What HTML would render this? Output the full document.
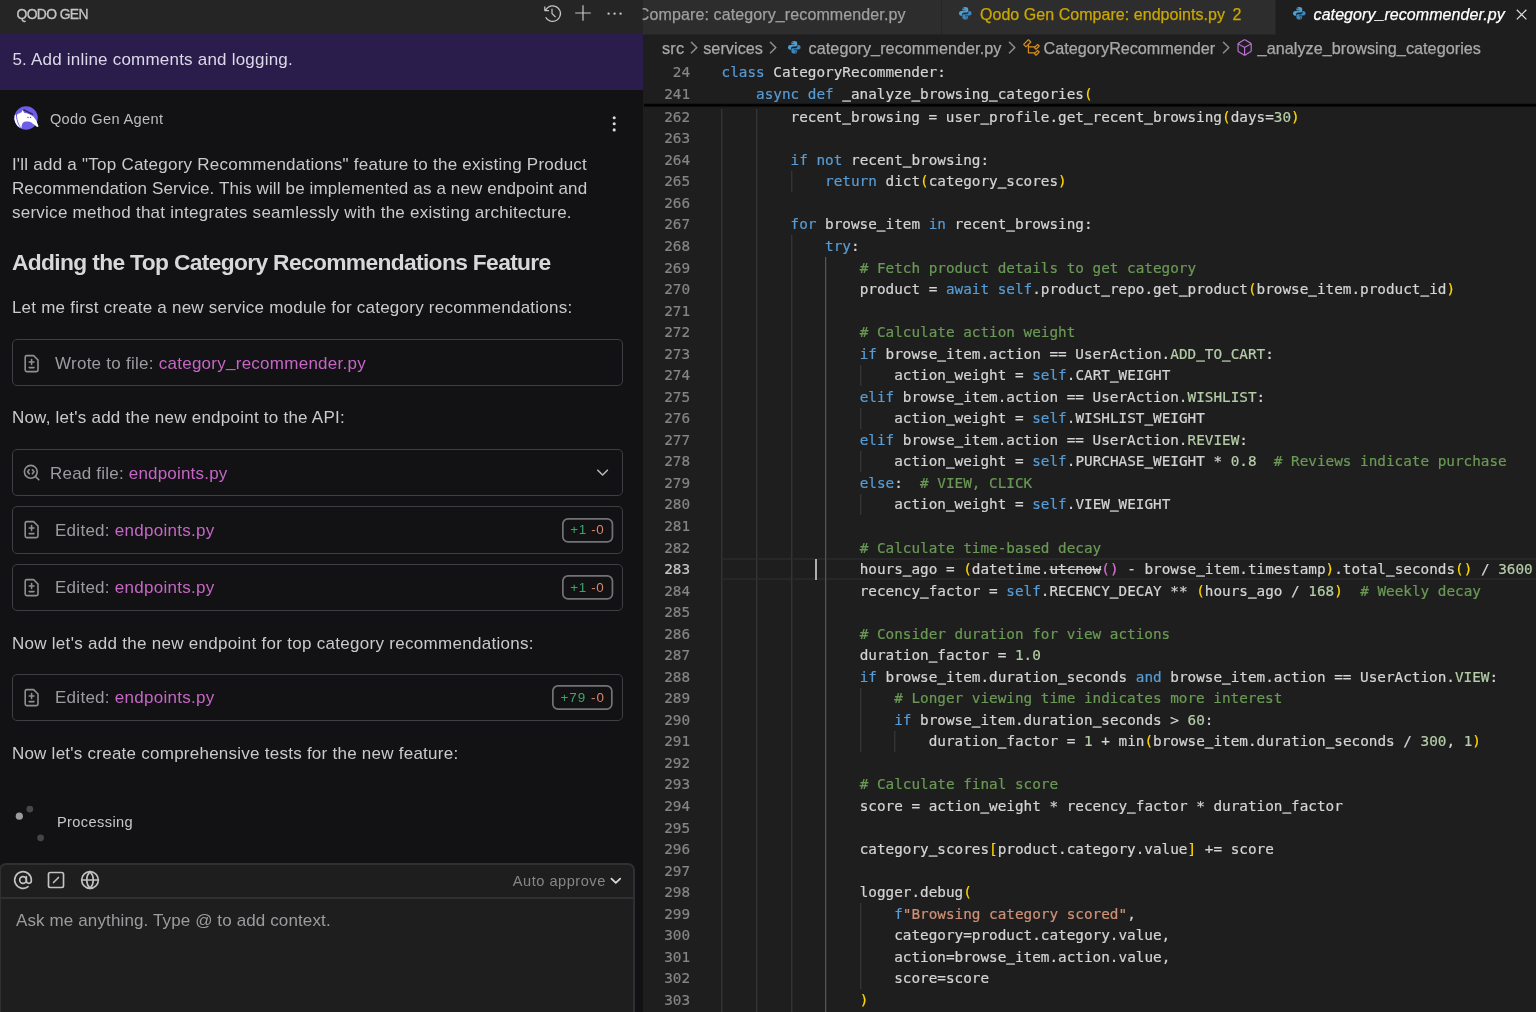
<!DOCTYPE html>
<html lang="en"><head><meta charset="utf-8"><title>Qodo Gen</title>
<style>
html,body{margin:0;padding:0}
body{width:1536px;height:1012px;overflow:hidden;position:relative;background:#1e1e1e;font-family:"Liberation Sans", sans-serif}
.abs{position:absolute}
.grp{position:absolute;left:0;top:0;width:0;height:0;margin:0;padding:0}
.t{margin:0;font-weight:normal}
.card{position:absolute;left:12px;width:611px;border:1px solid #3e3e43;border-radius:5px;box-sizing:border-box}
.ln{position:absolute;left:643px;width:47.1px;text-align:right;font-family:"DejaVu Sans Mono", "Liberation Mono", monospace;font-size:14.343px;line-height:22px;white-space:pre}
.cl{position:absolute;font-family:"DejaVu Sans Mono", "Liberation Mono", monospace;font-size:14.343px;line-height:22px;color:#d4d4d4;white-space:pre}
.u{position:relative;top:-1px;text-shadow:0 -0.7px 0 currentColor}
.us{position:relative;top:-1.2px}
.cl,.ln{-webkit-text-stroke:0.2px currentColor}
.g{position:absolute;width:1px;background:#333333}
.g2{position:absolute;width:1px;background:#272727}
svg{position:absolute;overflow:visible}
</style></head><body><div id="root" style="position:absolute;left:0;top:0;width:1536px;height:1012px;overflow:hidden;will-change:transform">

<aside id="qodo-panel" class="grp">
<div class='abs' style='left:0;top:0;width:642.5px;height:1012px;background:#121214'></div>
<header id="panel-title" class="grp">
<div class='abs' style='left:0;top:0;width:642.5px;height:34.3px;background:#252526'></div>
<h1 id="ttl" class="t" style='position:absolute;left:16.50px;top:5.01px;line-height:19px;font-size:13.9px;font-family:"Liberation Sans", sans-serif;color:#c4c4c4;white-space:pre;-webkit-text-stroke:0.3px currentColor;letter-spacing:-0.626px;'>QODO GEN</h1>
<svg style="left:542.9px;top:4.0px" width="19.2" height="19.2" viewBox="0 0 16 16"><path fill="#c5c5c5"  d="M13.507 12.324a7 7 0 0 0 .065-8.56A7 7 0 0 0 2 4.393V2H1v3.5l.5.5H5V5H2.811a6.008 6.008 0 1 1-.135 5.77l-.887.462a7 7 0 0 0 11.718 1.092zm-3.361-.97l.708-.707L8 7.792V4H7v4l.146.354 3 3z"/></svg>
<svg style="left:573.8px;top:4.0px" width="19.2" height="19.2" viewBox="0 0 16 16"><path fill="#c5c5c5"  d="M14 7v1H8v6H7V8H1V7h6V1h1v6h6z"/></svg>
<svg style="left:605.4px;top:4.2px" width="19.2" height="19.2" viewBox="0 0 16 16"><path fill="#c5c5c5"  d="M4 8a1 1 0 1 1-2 0 1 1 0 0 1 2 0zm5 0a1 1 0 1 1-2 0 1 1 0 0 1 2 0zm5 0a1 1 0 1 1-2 0 1 1 0 0 1 2 0z"/></svg>
</header>
<section id="user-message" class="grp">
<div class='abs' style='left:0;top:34.3px;width:642.6px;height:55.3px;background:#2b1d4b'></div>
<div id="ban" class="t" style='position:absolute;left:12.40px;top:47.61px;line-height:24px;font-size:17.0px;font-family:"Liberation Sans", sans-serif;color:#dcd8e8;white-space:pre;letter-spacing:0.211px;'>5. Add inline comments and logging.</div>
</section>
<section id="agent-message" class="grp">
<div id="agent" class="t" style='position:absolute;left:49.90px;top:109.00px;line-height:20px;font-size:14.6px;font-family:"Liberation Sans", sans-serif;color:#bdbdc0;white-space:pre;letter-spacing:0.340px;'>Qodo Gen Agent</div>
<svg style="left:604px;top:110px" width="20" height="30" viewBox="604 110 20 30"><circle cx="614.2" cy="117.8" r="1.55" fill="#dadadc"/><circle cx="614.2" cy="123.8" r="1.55" fill="#dadadc"/><circle cx="614.2" cy="129.9" r="1.55" fill="#dadadc"/></svg>
<div class='card' style='top:339px;height:47px'></div>
<div class='card' style='top:449px;height:47px'></div>
<div class='card' style='top:506px;height:48px'></div>
<div class='card' style='top:564px;height:47px'></div>
<div class='card' style='top:674px;height:47px'></div>
<svg style="left:559.60px;top:515.55px" width="55.30" height="28.75" viewBox="559.60 515.55 55.30 28.75"><rect x="562.45" y="518.40" width="49.60" height="23.05" rx="5.2" fill="none" stroke="#737375" stroke-width="1.7"/></svg>
<svg style="left:559.60px;top:572.95px" width="55.30" height="28.75" viewBox="559.60 572.95 55.30 28.75"><rect x="562.45" y="575.80" width="49.60" height="23.05" rx="5.2" fill="none" stroke="#737375" stroke-width="1.7"/></svg>
<svg style="left:550.00px;top:682.90px" width="64.70" height="29.00" viewBox="550.00 682.90 64.70 29.00"><rect x="552.85" y="685.75" width="59.00" height="23.30" rx="5.2" fill="none" stroke="#737375" stroke-width="1.7"/></svg>
<svg style="left:22.3px;top:353.59999999999997px" width="19.2" height="19.2" viewBox="0 0 24 24" fill="none" stroke="#8f8f92" stroke-width="2" stroke-linecap="round" stroke-linejoin="round"><path d="M14.5 2H6a2 2 0 0 0-2 2v16a2 2 0 0 0 2 2h12a2 2 0 0 0 2-2V7.5L14.5 2z"/><path d="M9 10h6"/><path d="M12 13V7"/><path d="M9 17h6"/></svg>
<svg style="left:22.3px;top:520.4px" width="19.2" height="19.2" viewBox="0 0 24 24" fill="none" stroke="#8f8f92" stroke-width="2" stroke-linecap="round" stroke-linejoin="round"><path d="M14.5 2H6a2 2 0 0 0-2 2v16a2 2 0 0 0 2 2h12a2 2 0 0 0 2-2V7.5L14.5 2z"/><path d="M9 10h6"/><path d="M12 13V7"/><path d="M9 17h6"/></svg>
<svg style="left:22.3px;top:577.8000000000001px" width="19.2" height="19.2" viewBox="0 0 24 24" fill="none" stroke="#8f8f92" stroke-width="2" stroke-linecap="round" stroke-linejoin="round"><path d="M14.5 2H6a2 2 0 0 0-2 2v16a2 2 0 0 0 2 2h12a2 2 0 0 0 2-2V7.5L14.5 2z"/><path d="M9 10h6"/><path d="M12 13V7"/><path d="M9 17h6"/></svg>
<svg style="left:22.3px;top:688.0px" width="19.2" height="19.2" viewBox="0 0 24 24" fill="none" stroke="#8f8f92" stroke-width="2" stroke-linecap="round" stroke-linejoin="round"><path d="M14.5 2H6a2 2 0 0 0-2 2v16a2 2 0 0 0 2 2h12a2 2 0 0 0 2-2V7.5L14.5 2z"/><path d="M9 10h6"/><path d="M12 13V7"/><path d="M9 17h6"/></svg>
<svg style="left:22.25px;top:462.9px" width="19.2" height="19.2" viewBox="0 0 24 24" fill="none" stroke="#8f8f92" stroke-width="2" stroke-linecap="round" stroke-linejoin="round"><circle cx="11" cy="11" r="8"/><path d="m21 21-4.3-4.3"/><path d="m13 13.5 2-2.5-2-2.5"/><path d="m9 8.5-2 2.5 2 2.5"/></svg>
<svg style="left:593.4px;top:462.9px" width="19.2" height="19.2" viewBox="0 0 24 24" fill="none" stroke="#b4b4b6" stroke-width="2" stroke-linecap="round" stroke-linejoin="round"><path d="m6 9 6 6 6-6"/></svg>
<svg style="left:13.5px;top:106.4px" width="26" height="24.5" viewBox="13.5 106.4 26 24.5"><circle cx="25.55" cy="118.4" r="11.7" fill="#6d5fe8"/><path fill="#ffffff" d="M17.3 114.3 L21.0 112.7 L22.2 110.4 L23.6 113.2 C27 113.8 31 115.2 33.3 117.5 L35.8 121 L38.1 127 L36.5 127.4 C34.5 125.5 33 124.5 32 123.8 C30.5 122.6 29.2 122 28.2 121.9 L25.1 121.9 C23.5 122.3 22.5 123 21.9 123.8 C21.2 125.2 21 127 21 129 C18.5 125.5 16.6 120.5 16.4 115.6 Z"/><path fill="#ffffff" d="M14.39 114.9 A11.7 11.7 0 0 0 20.09 128.75 C17.6 125.3 15.6 120.5 15.4 115.3 Z"/><path fill="none" stroke="#2e2668" stroke-width="1.4" stroke-linecap="round" d="M23.4 110.3 C26 111.9 29.5 113.2 32.0 114.6"/><circle cx="27.5" cy="117.7" r="0.6" fill="#2a2a2a"/><circle cx="30.15" cy="117.7" r="0.6" fill="#2a2a2a"/></svg>
<p id="p1" class="t" style='position:absolute;left:11.90px;top:153.21px;line-height:24px;font-size:17.0px;font-family:"Liberation Sans", sans-serif;color:#cacacc;white-space:pre;letter-spacing:0.239px;'>I&#39;ll add a &quot;Top Category Recommendations&quot; feature to the existing Product</p>
<p id="p2" class="t" style='position:absolute;left:11.90px;top:176.91px;line-height:24px;font-size:17.0px;font-family:"Liberation Sans", sans-serif;color:#cacacc;white-space:pre;letter-spacing:0.138px;'>Recommendation Service. This will be implemented as a new endpoint and</p>
<p id="p3" class="t" style='position:absolute;left:11.90px;top:200.61px;line-height:24px;font-size:17.0px;font-family:"Liberation Sans", sans-serif;color:#cacacc;white-space:pre;letter-spacing:0.267px;'>service method that integrates seamlessly with the existing architecture.</p>
<h2 id="h1" class="t" style='position:absolute;left:12.00px;top:245.81px;line-height:32px;font-size:22.8px;font-family:"Liberation Sans", sans-serif;color:#d8d8da;white-space:pre;font-weight:bold;letter-spacing:-0.659px;'>Adding the Top Category Recommendations Feature</h2>
<p id="p4" class="t" style='position:absolute;left:11.90px;top:296.30px;line-height:24px;font-size:17.0px;font-family:"Liberation Sans", sans-serif;color:#cacacc;white-space:pre;letter-spacing:0.232px;'>Let me first create a new service module for category recommendations:</p>
<div id="c1" class="t" style='position:absolute;left:55.00px;top:351.61px;line-height:24px;font-size:17.0px;font-family:"Liberation Sans", sans-serif;color:#c566c5;white-space:pre;letter-spacing:0.259px;'><span style="color:#9c9ca0">Wrote to file: </span>category<span class="us">_</span>recommender.py</div>
<p id="p5" class="t" style='position:absolute;left:11.90px;top:406.00px;line-height:24px;font-size:17.0px;font-family:"Liberation Sans", sans-serif;color:#cacacc;white-space:pre;letter-spacing:0.240px;'>Now, let&#39;s add the new endpoint to the API:</p>
<div id="c2" class="t" style='position:absolute;left:50.00px;top:461.80px;line-height:24px;font-size:17.0px;font-family:"Liberation Sans", sans-serif;color:#c566c5;white-space:pre;letter-spacing:0.198px;'><span style="color:#9c9ca0">Read file: </span>endpoints.py</div>
<div id="c3" class="t" style='position:absolute;left:55.00px;top:519.00px;line-height:24px;font-size:17.0px;font-family:"Liberation Sans", sans-serif;color:#c566c5;white-space:pre;letter-spacing:0.272px;'><span style="color:#9c9ca0">Edited: </span>endpoints.py</div>
<div id="c4" class="t" style='position:absolute;left:55.00px;top:576.21px;line-height:24px;font-size:17.0px;font-family:"Liberation Sans", sans-serif;color:#c566c5;white-space:pre;letter-spacing:0.272px;'><span style="color:#9c9ca0">Edited: </span>endpoints.py</div>
<p id="p6" class="t" style='position:absolute;left:11.90px;top:631.61px;line-height:24px;font-size:17.0px;font-family:"Liberation Sans", sans-serif;color:#cacacc;white-space:pre;letter-spacing:0.294px;'>Now let&#39;s add the new endpoint for top category recommendations:</p>
<div id="c5" class="t" style='position:absolute;left:55.00px;top:686.41px;line-height:24px;font-size:17.0px;font-family:"Liberation Sans", sans-serif;color:#c566c5;white-space:pre;letter-spacing:0.272px;'><span style="color:#9c9ca0">Edited: </span>endpoints.py</div>
<p id="p7" class="t" style='position:absolute;left:11.90px;top:741.80px;line-height:24px;font-size:17.0px;font-family:"Liberation Sans", sans-serif;color:#cacacc;white-space:pre;letter-spacing:0.250px;'>Now let&#39;s create comprehensive tests for the new feature:</p>
<div id="b1" class="t" style='position:absolute;left:570.30px;top:520.30px;line-height:19px;font-size:13.4px;font-family:"Liberation Sans", sans-serif;color:#3fa468;white-space:pre;letter-spacing:0.613px;'><span style="color:#3fa468">+1</span> <span style="color:#d9866c">-0</span></div>
<div id="b2" class="t" style='position:absolute;left:570.30px;top:577.71px;line-height:19px;font-size:13.4px;font-family:"Liberation Sans", sans-serif;color:#3fa468;white-space:pre;letter-spacing:0.613px;'><span style="color:#3fa468">+1</span> <span style="color:#d9866c">-0</span></div>
<div id="b3" class="t" style='position:absolute;left:560.50px;top:687.91px;line-height:19px;font-size:13.4px;font-family:"Liberation Sans", sans-serif;color:#3fa468;white-space:pre;letter-spacing:1.038px;'><span style="color:#3fa468">+79</span> <span style="color:#d9866c">-0</span></div>
<svg style="left:0;top:800px" width="60" height="50" viewBox="0 800 60 50"><circle cx="19.3" cy="816.2" r="3.6" fill="#9c9c9e"/><circle cx="29.8" cy="809.1" r="3.4" fill="#474749"/><circle cx="40.6" cy="837.8" r="3.4" fill="#454547"/></svg>
<div id="proc" class="t" style='position:absolute;left:57.00px;top:811.91px;line-height:20px;font-size:14.6px;font-family:"Liberation Sans", sans-serif;color:#c8c8ca;white-space:pre;letter-spacing:0.380px;'>Processing</div>
</section>
<footer id="chat-input" class="grp">
<div class='abs' style='left:-1px;top:862.6px;width:632.4px;height:160px;background:#1e1e1e;border:2px solid #303032;border-radius:7px;box-sizing:content-box'></div>
<div class='abs' style='left:0;top:896.8px;width:634px;height:2px;background:#303032'></div>
<svg style="left:607.3px;top:871.8px" width="17.6" height="17.6" viewBox="0 0 24 24" fill="none" stroke="#d6d6d8" stroke-width="2.4" stroke-linecap="round" stroke-linejoin="round"><path d="m6 9 6 6 6-6"/></svg>
<svg style="left:12.75px;top:870.1px" width="20" height="20" viewBox="0 0 24 24" fill="none" stroke="#c2c2c4" stroke-width="2" stroke-linecap="round" stroke-linejoin="round"><circle cx="12" cy="12" r="4"/><path d="M16 8v5a3 3 0 0 0 6 0v-1a10 10 0 1 0-4 8"/></svg>
<svg style="left:46.3px;top:870.1px" width="20" height="20" viewBox="0 0 24 24" fill="none" stroke="#c2c2c4" stroke-width="2" stroke-linecap="round" stroke-linejoin="round"><rect width="18" height="18" x="3" y="3" rx="2"/><path d="M9 15 15 9"/></svg>
<svg style="left:79.7px;top:870.1px" width="20" height="20" viewBox="0 0 24 24" fill="none" stroke="#c2c2c4" stroke-width="2" stroke-linecap="round" stroke-linejoin="round"><circle cx="12" cy="12" r="10"/><path d="M12 2a14.5 14.5 0 0 0 0 20 14.5 14.5 0 0 0 0-20"/><path d="M2 12h20"/></svg>
<div id="auto" class="t" style='position:absolute;left:512.80px;top:871.00px;line-height:20px;font-size:14.6px;font-family:"Liberation Sans", sans-serif;color:#868688;white-space:pre;letter-spacing:0.514px;'>Auto approve</div>
<div id="ph" class="t" style='position:absolute;left:16.00px;top:909.00px;line-height:24px;font-size:17.0px;font-family:"Liberation Sans", sans-serif;color:#9c9ca0;white-space:pre;letter-spacing:0.125px;'>Ask me anything. Type @ to add context.</div>
</footer>
</aside>
<main id="editor" class="grp">
<div id="tabs" class="grp" role="tablist">
<div class='abs' style='left:642.5px;top:0;width:893.5px;height:35px;background:#252527'></div>
<div class='abs' style='left:642.5px;top:0;width:298.5px;height:34px;background:#2d2d2d'></div>
<div class='abs' style='left:941.6px;top:0;width:333.8px;height:34px;background:#2d2d2d'></div>
<div class='abs' style='left:1276px;top:0;width:260px;height:35px;background:#1e1e1e'></div>
<svg style="left:1512.2px;top:4.5px" width="19.2" height="19.2" viewBox="0 0 16 16"><path fill="#e0e0e0"  d="M8 8.707l3.646 3.647.708-.707L8.707 8l3.647-3.646-.707-.708L8 7.293 4.354 3.646l-.707.708L7.293 8l-3.646 3.646.707.708L8 8.707z"/></svg>
<svg style="left:958.8px;top:7.0px" width="12.6" height="12.6" viewBox="0 0 12 12"><path fill="#4b9fd5" fill-rule="evenodd" d="M6 0C3.6 0 3.3 1 3.3 2V3.3H6.2V3.8H2C0.8 3.8 0 4.8 0 6C0 7.4 0.8 8.3 2 8.3H3V6.9C3 5.9 3.8 5.2 4.7 5.2H7.4C8.2 5.2 8.8 4.6 8.8 3.8V2C8.8 0.8 7.8 0 6 0ZM4.6 0.9A0.55 0.55 0 1 1 4.6 2A0.55 0.55 0 1 1 4.6 0.9Z"/><path fill="#3a86bd" fill-rule="evenodd" transform="rotate(180 6 6)" d="M6 0C3.6 0 3.3 1 3.3 2V3.3H6.2V3.8H2C0.8 3.8 0 4.8 0 6C0 7.4 0.8 8.3 2 8.3H3V6.9C3 5.9 3.8 5.2 4.7 5.2H7.4C8.2 5.2 8.8 4.6 8.8 3.8V2C8.8 0.8 7.8 0 6 0ZM4.6 0.9A0.55 0.55 0 1 1 4.6 2A0.55 0.55 0 1 1 4.6 0.9Z"/></svg>
<svg style="left:1293.1px;top:7.0px" width="12.6" height="12.6" viewBox="0 0 12 12"><path fill="#4b9fd5" fill-rule="evenodd" d="M6 0C3.6 0 3.3 1 3.3 2V3.3H6.2V3.8H2C0.8 3.8 0 4.8 0 6C0 7.4 0.8 8.3 2 8.3H3V6.9C3 5.9 3.8 5.2 4.7 5.2H7.4C8.2 5.2 8.8 4.6 8.8 3.8V2C8.8 0.8 7.8 0 6 0ZM4.6 0.9A0.55 0.55 0 1 1 4.6 2A0.55 0.55 0 1 1 4.6 0.9Z"/><path fill="#3a86bd" fill-rule="evenodd" transform="rotate(180 6 6)" d="M6 0C3.6 0 3.3 1 3.3 2V3.3H6.2V3.8H2C0.8 3.8 0 4.8 0 6C0 7.4 0.8 8.3 2 8.3H3V6.9C3 5.9 3.8 5.2 4.7 5.2H7.4C8.2 5.2 8.8 4.6 8.8 3.8V2C8.8 0.8 7.8 0 6 0ZM4.6 0.9A0.55 0.55 0 1 1 4.6 2A0.55 0.55 0 1 1 4.6 0.9Z"/></svg>
<div id="tab1" class="t" style='position:absolute;left:637.80px;top:3.81px;line-height:22px;font-size:16.0px;font-family:"Liberation Sans", sans-serif;color:#9f9f9f;white-space:pre;clip-path:inset(-5px -5px -5px 4.9px);-webkit-text-stroke:0.25px currentColor;letter-spacing:0.114px;'>Compare: category<span class="us">_</span>recommender.py</div>
<div id="tab2" class="t" style='position:absolute;left:980.00px;top:3.81px;line-height:22px;font-size:16.0px;font-family:"Liberation Sans", sans-serif;color:#cca700;white-space:pre;-webkit-text-stroke:0.25px currentColor;letter-spacing:0.043px;'>Qodo Gen Compare: endpoints.py</div>
<div id="tab2n" class="t" style='position:absolute;left:1232.40px;top:3.81px;line-height:22px;font-size:16.0px;font-family:"Liberation Sans", sans-serif;color:#cca700;white-space:pre;-webkit-text-stroke:0.25px currentColor;letter-spacing:-0.106px;'>2</div>
<div id="tab3" class="t" style='position:absolute;left:1313.60px;top:3.81px;line-height:22px;font-size:16.0px;font-family:"Liberation Sans", sans-serif;color:#ffffff;white-space:pre;font-style:italic;-webkit-text-stroke:0.25px currentColor;letter-spacing:0.064px;'>category<span class="us">_</span>recommender.py</div>
</div>
<nav id="breadcrumbs" class="grp">
<svg style="left:683.6px;top:38.3px" width="19.2" height="19.2" viewBox="0 0 16 16"><path fill="#929292" stroke="#929292" stroke-width="0.45" d="M10.072 8.024L5.715 3.667l.618-.62L11 7.716v.618L6.333 13l-.618-.619 4.357-4.357z"/></svg>
<svg style="left:762.8px;top:38.3px" width="19.2" height="19.2" viewBox="0 0 16 16"><path fill="#929292" stroke="#929292" stroke-width="0.45" d="M10.072 8.024L5.715 3.667l.618-.62L11 7.716v.618L6.333 13l-.618-.619 4.357-4.357z"/></svg>
<svg style="left:1002.4px;top:38.3px" width="19.2" height="19.2" viewBox="0 0 16 16"><path fill="#929292" stroke="#929292" stroke-width="0.45" d="M10.072 8.024L5.715 3.667l.618-.62L11 7.716v.618L6.333 13l-.618-.619 4.357-4.357z"/></svg>
<svg style="left:1216.0px;top:38.3px" width="19.2" height="19.2" viewBox="0 0 16 16"><path fill="#929292" stroke="#929292" stroke-width="0.45" d="M10.072 8.024L5.715 3.667l.618-.62L11 7.716v.618L6.333 13l-.618-.619 4.357-4.357z"/></svg>
<svg style="left:1021.5px;top:38.4px" width="19.2" height="19.2" viewBox="0 0 16 16"><path fill="#d9901f"  d="M11.34 9.71h.71l2.67-2.67v-.71L13.38 5h-.7l-1.82 1.81h-5V5.56l1.86-1.85V3l-2-2H5L1 5v.71l2 2h.71l1.14-1.15v5.79l.5.5H10v.52l1.33 1.34h.71l2.67-2.67v-.71L13.37 10h-.7l-1.86 1.85h-5v-4H10v.48l1.34 1.38zm1.69-3.65l.63.63-2 2-.63-.63 2-2zm0 5l.63.63-2 2-.63-.63 2-2zM3.35 6.65l-1.29-1.3 3.29-3.29 1.3 1.29-3.3 3.3z"/></svg>
<svg style="left:1234.7px;top:38.1px" width="19.2" height="19.2" viewBox="0 0 16 16"><path fill="#b772d2"  d="M13.51 4l-5-3h-1l-5 3-.49.86v6l.49.85 5 3h1l5-3 .49-.85v-6L13.51 4zm-6 9.56l-4.5-2.7V5.7l4.5 2.45v5.41zM3.27 4.7l4.74-2.84 4.74 2.84-4.74 2.59L3.27 4.7zm9.74 6.16l-4.5 2.7V8.15l4.5-2.45v5.16z"/></svg>
<svg style="left:787.6px;top:41.3px" width="12.6" height="12.6" viewBox="0 0 12 12"><path fill="#4b9fd5" fill-rule="evenodd" d="M6 0C3.6 0 3.3 1 3.3 2V3.3H6.2V3.8H2C0.8 3.8 0 4.8 0 6C0 7.4 0.8 8.3 2 8.3H3V6.9C3 5.9 3.8 5.2 4.7 5.2H7.4C8.2 5.2 8.8 4.6 8.8 3.8V2C8.8 0.8 7.8 0 6 0ZM4.6 0.9A0.55 0.55 0 1 1 4.6 2A0.55 0.55 0 1 1 4.6 0.9Z"/><path fill="#3a86bd" fill-rule="evenodd" transform="rotate(180 6 6)" d="M6 0C3.6 0 3.3 1 3.3 2V3.3H6.2V3.8H2C0.8 3.8 0 4.8 0 6C0 7.4 0.8 8.3 2 8.3H3V6.9C3 5.9 3.8 5.2 4.7 5.2H7.4C8.2 5.2 8.8 4.6 8.8 3.8V2C8.8 0.8 7.8 0 6 0ZM4.6 0.9A0.55 0.55 0 1 1 4.6 2A0.55 0.55 0 1 1 4.6 0.9Z"/></svg>
<div id="bc1" class="t" style='position:absolute;left:661.90px;top:37.21px;line-height:23px;font-size:16.2px;font-family:"Liberation Sans", sans-serif;color:#a9a9a9;white-space:pre;-webkit-text-stroke:0.25px currentColor;letter-spacing:0.341px;'>src</div>
<div id="bc2" class="t" style='position:absolute;left:703.20px;top:37.21px;line-height:23px;font-size:16.2px;font-family:"Liberation Sans", sans-serif;color:#a9a9a9;white-space:pre;-webkit-text-stroke:0.25px currentColor;letter-spacing:0.053px;'>services</div>
<div id="bc3" class="t" style='position:absolute;left:808.60px;top:37.21px;line-height:23px;font-size:16.2px;font-family:"Liberation Sans", sans-serif;color:#a9a9a9;white-space:pre;-webkit-text-stroke:0.25px currentColor;letter-spacing:0.049px;'>category<span class="us">_</span>recommender.py</div>
<div id="bc4" class="t" style='position:absolute;left:1043.60px;top:37.21px;line-height:23px;font-size:16.2px;font-family:"Liberation Sans", sans-serif;color:#a9a9a9;white-space:pre;-webkit-text-stroke:0.25px currentColor;letter-spacing:-0.018px;'>CategoryRecommender</div>
<div id="bc5" class="t" style='position:absolute;left:1257.60px;top:37.21px;line-height:23px;font-size:16.2px;font-family:"Liberation Sans", sans-serif;color:#a9a9a9;white-space:pre;-webkit-text-stroke:0.25px currentColor;letter-spacing:0.038px;'><span class="us">_</span>analyze<span class="us">_</span>browsing<span class="us">_</span>categories</div>
</nav>
<div id="code" class="grp">
<div class='abs' style='left:722px;top:558.2px;width:814px;height:22.2px;border-top:2.4px solid #272727;border-bottom:2.4px solid #272727;box-sizing:border-box'></div>
<div class='abs' style='left:814.6px;top:559px;width:2.4px;height:21px;background:#aeafad'></div>
<div class='abs' style='left:643px;top:108.7px;width:893px;height:904px;overflow:hidden'><div class='abs' style='left:-643px;top:-108.7px'>
<div class='g' style='left:721px;top:106.2px;height:926.3px'></div>
<div class='g2' style='left:722px;top:106.2px;height:926.3px'></div>
<div class='g' style='left:756px;top:106.2px;height:926.3px'></div>
<div class='g2' style='left:757px;top:106.2px;height:926.3px'></div>
<div class='g' style='left:791px;top:170.8px;height:21.6px'></div>
<div class='g2' style='left:792px;top:170.8px;height:21.6px'></div>
<div class='g' style='left:791px;top:235.4px;height:797.0px'></div>
<div class='g2' style='left:792px;top:235.4px;height:797.0px'></div>
<div class='g' style='left:825px;top:257.0px;height:775.5px;background:#555555'></div>
<div class='g2' style='left:826px;top:257.0px;height:775.5px;background:#2c2c2c'></div>
<div class='g' style='left:860px;top:364.7px;height:21.6px'></div>
<div class='g2' style='left:861px;top:364.7px;height:21.6px'></div>
<div class='g' style='left:860px;top:407.8px;height:21.6px'></div>
<div class='g2' style='left:861px;top:407.8px;height:21.6px'></div>
<div class='g' style='left:860px;top:450.8px;height:21.6px'></div>
<div class='g2' style='left:861px;top:450.8px;height:21.6px'></div>
<div class='g' style='left:860px;top:493.9px;height:21.6px'></div>
<div class='g2' style='left:861px;top:493.9px;height:21.6px'></div>
<div class='g' style='left:860px;top:687.8px;height:64.7px'></div>
<div class='g2' style='left:861px;top:687.8px;height:64.7px'></div>
<div class='g' style='left:860px;top:903.2px;height:86.2px'></div>
<div class='g2' style='left:861px;top:903.2px;height:86.2px'></div>
<div class='g' style='left:894px;top:730.9px;height:21.6px'></div>
<div class='g2' style='left:895px;top:730.9px;height:21.6px'></div>
</div></div>
<div class='ln' style='top:105.74px;color:#858585'>262</div><div class='cl' style='top:105.74px;left:790.58px'>recent<span class="u">_</span>browsing = user<span class="u">_</span>profile.get<span class="u">_</span>recent<span class="u">_</span>browsing<span style="color:#ffd700">(</span>days=<span style="color:#b5cea8">30</span><span style="color:#ffd700">)</span></div>
<div class='ln' style='top:127.28px;color:#858585'>263</div>
<div class='ln' style='top:148.82px;color:#858585'>264</div><div class='cl' style='top:148.82px;left:790.58px'><span style="color:#569cd6">if</span> <span style="color:#569cd6">not</span> recent<span class="u">_</span>browsing:</div>
<div class='ln' style='top:170.36px;color:#858585'>265</div><div class='cl' style='top:170.36px;left:825.12px'><span style="color:#569cd6">return</span> dict<span style="color:#ffd700">(</span>category<span class="u">_</span>scores<span style="color:#ffd700">)</span></div>
<div class='ln' style='top:191.90px;color:#858585'>266</div>
<div class='ln' style='top:213.44px;color:#858585'>267</div><div class='cl' style='top:213.44px;left:790.58px'><span style="color:#569cd6">for</span> browse<span class="u">_</span>item <span style="color:#569cd6">in</span> recent<span class="u">_</span>browsing:</div>
<div class='ln' style='top:234.98px;color:#858585'>268</div><div class='cl' style='top:234.98px;left:825.12px'><span style="color:#569cd6">try</span>:</div>
<div class='ln' style='top:256.52px;color:#858585'>269</div><div class='cl' style='top:256.52px;left:859.66px'><span style="color:#6a9955"># Fetch product details to get category</span></div>
<div class='ln' style='top:278.06px;color:#858585'>270</div><div class='cl' style='top:278.06px;left:859.66px'>product = <span style="color:#569cd6">await</span> <span style="color:#569cd6">self</span>.product<span class="u">_</span>repo.get<span class="u">_</span>product<span style="color:#ffd700">(</span>browse<span class="u">_</span>item.product<span class="u">_</span>id<span style="color:#ffd700">)</span></div>
<div class='ln' style='top:299.60px;color:#858585'>271</div>
<div class='ln' style='top:321.14px;color:#858585'>272</div><div class='cl' style='top:321.14px;left:859.66px'><span style="color:#6a9955"># Calculate action weight</span></div>
<div class='ln' style='top:342.68px;color:#858585'>273</div><div class='cl' style='top:342.68px;left:859.66px'><span style="color:#569cd6">if</span> browse<span class="u">_</span>item.action == UserAction.<span style="color:#b5cea8">ADD<span class="u">_</span>TO<span class="u">_</span>CART</span>:</div>
<div class='ln' style='top:364.22px;color:#858585'>274</div><div class='cl' style='top:364.22px;left:894.20px'>action<span class="u">_</span>weight = <span style="color:#569cd6">self</span>.CART<span class="u">_</span>WEIGHT</div>
<div class='ln' style='top:385.76px;color:#858585'>275</div><div class='cl' style='top:385.76px;left:859.66px'><span style="color:#569cd6">elif</span> browse<span class="u">_</span>item.action == UserAction.<span style="color:#b5cea8">WISHLIST</span>:</div>
<div class='ln' style='top:407.30px;color:#858585'>276</div><div class='cl' style='top:407.30px;left:894.20px'>action<span class="u">_</span>weight = <span style="color:#569cd6">self</span>.WISHLIST<span class="u">_</span>WEIGHT</div>
<div class='ln' style='top:428.84px;color:#858585'>277</div><div class='cl' style='top:428.84px;left:859.66px'><span style="color:#569cd6">elif</span> browse<span class="u">_</span>item.action == UserAction.<span style="color:#b5cea8">REVIEW</span>:</div>
<div class='ln' style='top:450.38px;color:#858585'>278</div><div class='cl' style='top:450.38px;left:894.20px'>action<span class="u">_</span>weight = <span style="color:#569cd6">self</span>.PURCHASE<span class="u">_</span>WEIGHT * <span style="color:#b5cea8">0.8</span>  <span style="color:#6a9955"># Reviews indicate purchase</span></div>
<div class='ln' style='top:471.92px;color:#858585'>279</div><div class='cl' style='top:471.92px;left:859.66px'><span style="color:#569cd6">else</span>:  <span style="color:#6a9955"># VIEW, CLICK</span></div>
<div class='ln' style='top:493.46px;color:#858585'>280</div><div class='cl' style='top:493.46px;left:894.20px'>action<span class="u">_</span>weight = <span style="color:#569cd6">self</span>.VIEW<span class="u">_</span>WEIGHT</div>
<div class='ln' style='top:515.00px;color:#858585'>281</div>
<div class='ln' style='top:536.54px;color:#858585'>282</div><div class='cl' style='top:536.54px;left:859.66px'><span style="color:#6a9955"># Calculate time-based decay</span></div>
<div class='ln' style='top:558.08px;color:#c6c6c6'>283</div><div class='cl' style='top:558.08px;left:859.66px'>hours<span class="u">_</span>ago = <span style="color:#ffd700">(</span>datetime.<span style="text-decoration:line-through">utcnow</span><span style="color:#da70d6">()</span> - browse<span class="u">_</span>item.timestamp<span style="color:#ffd700">)</span>.total<span class="u">_</span>seconds<span style="color:#ffd700">()</span> / <span style="color:#b5cea8">3600</span></div>
<div class='ln' style='top:579.62px;color:#858585'>284</div><div class='cl' style='top:579.62px;left:859.66px'>recency<span class="u">_</span>factor = <span style="color:#569cd6">self</span>.RECENCY<span class="u">_</span>DECAY ** <span style="color:#ffd700">(</span>hours<span class="u">_</span>ago / <span style="color:#b5cea8">168</span><span style="color:#ffd700">)</span>  <span style="color:#6a9955"># Weekly decay</span></div>
<div class='ln' style='top:601.16px;color:#858585'>285</div>
<div class='ln' style='top:622.70px;color:#858585'>286</div><div class='cl' style='top:622.70px;left:859.66px'><span style="color:#6a9955"># Consider duration for view actions</span></div>
<div class='ln' style='top:644.24px;color:#858585'>287</div><div class='cl' style='top:644.24px;left:859.66px'>duration<span class="u">_</span>factor = <span style="color:#b5cea8">1.0</span></div>
<div class='ln' style='top:665.78px;color:#858585'>288</div><div class='cl' style='top:665.78px;left:859.66px'><span style="color:#569cd6">if</span> browse<span class="u">_</span>item.duration<span class="u">_</span>seconds <span style="color:#569cd6">and</span> browse<span class="u">_</span>item.action == UserAction.<span style="color:#b5cea8">VIEW</span>:</div>
<div class='ln' style='top:687.32px;color:#858585'>289</div><div class='cl' style='top:687.32px;left:894.20px'><span style="color:#6a9955"># Longer viewing time indicates more interest</span></div>
<div class='ln' style='top:708.86px;color:#858585'>290</div><div class='cl' style='top:708.86px;left:894.20px'><span style="color:#569cd6">if</span> browse<span class="u">_</span>item.duration<span class="u">_</span>seconds &gt; <span style="color:#b5cea8">60</span>:</div>
<div class='ln' style='top:730.40px;color:#858585'>291</div><div class='cl' style='top:730.40px;left:928.74px'>duration<span class="u">_</span>factor = <span style="color:#b5cea8">1</span> + min<span style="color:#ffd700">(</span>browse<span class="u">_</span>item.duration<span class="u">_</span>seconds / <span style="color:#b5cea8">300</span>, <span style="color:#b5cea8">1</span><span style="color:#ffd700">)</span></div>
<div class='ln' style='top:751.94px;color:#858585'>292</div>
<div class='ln' style='top:773.48px;color:#858585'>293</div><div class='cl' style='top:773.48px;left:859.66px'><span style="color:#6a9955"># Calculate final score</span></div>
<div class='ln' style='top:795.02px;color:#858585'>294</div><div class='cl' style='top:795.02px;left:859.66px'>score = action<span class="u">_</span>weight * recency<span class="u">_</span>factor * duration<span class="u">_</span>factor</div>
<div class='ln' style='top:816.56px;color:#858585'>295</div>
<div class='ln' style='top:838.10px;color:#858585'>296</div><div class='cl' style='top:838.10px;left:859.66px'>category<span class="u">_</span>scores<span style="color:#ffd700">[</span>product.category.value<span style="color:#ffd700">]</span> += score</div>
<div class='ln' style='top:859.64px;color:#858585'>297</div>
<div class='ln' style='top:881.18px;color:#858585'>298</div><div class='cl' style='top:881.18px;left:859.66px'>logger.debug<span style="color:#ffd700">(</span></div>
<div class='ln' style='top:902.72px;color:#858585'>299</div><div class='cl' style='top:902.72px;left:894.20px'><span style="color:#569cd6">f</span><span style="color:#ce9178">&quot;Browsing category scored&quot;</span>,</div>
<div class='ln' style='top:924.26px;color:#858585'>300</div><div class='cl' style='top:924.26px;left:894.20px'>category=product.category.value,</div>
<div class='ln' style='top:945.80px;color:#858585'>301</div><div class='cl' style='top:945.80px;left:894.20px'>action=browse<span class="u">_</span>item.action.value,</div>
<div class='ln' style='top:967.34px;color:#858585'>302</div><div class='cl' style='top:967.34px;left:894.20px'>score=score</div>
<div class='ln' style='top:988.88px;color:#858585'>303</div><div class='cl' style='top:988.88px;left:859.66px'><span style="color:#ffd700">)</span></div>
</div>
<div id="sticky-scroll" class="grp">
<div class='abs' style='left:643.5px;top:103px;width:892.5px;height:5px;background:linear-gradient(#1e1e1e 0%,#0a0a0a 24%,#000 34%,#000 58%,#111 72%,#1a1a1a 86%,#1e1e1e 100%)'></div>
<div class='ln' style='top:60.64px;color:#858585'>24</div><div class='cl' style='top:60.64px;left:721.50px'><span style="color:#569cd6">class</span> CategoryRecommender:</div>
<div class='ln' style='top:82.74px;color:#858585'>241</div><div class='cl' style='top:82.74px;left:756.04px'><span style="color:#569cd6">async</span> <span style="color:#569cd6">def</span> <span class="u">_</span>analyze<span class="u">_</span>browsing<span class="u">_</span>categories<span style="color:#ffd700">(</span></div>
</div>
</main>
</div></body></html>
